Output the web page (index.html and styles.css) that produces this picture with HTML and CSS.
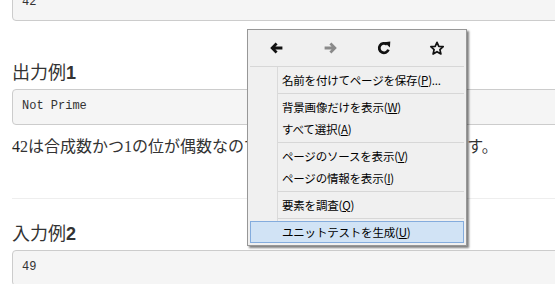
FILE: index.html
```html
<!DOCTYPE html>
<html>
<head>
    <title>出力例</title>
    <link rel="stylesheet" href="styles.css">
</head>
<body>
    <div class="page">
        <pre class="sample first">42</pre>

        <h3>出力例<span class="num">1</span></h3>
        <pre class="sample">Not Prime</pre>
        <p>42は合成数かつ1の位が偶数なので、素数ではないと判定されます。</p>

        <hr>

        <h3>入力例<span class="num">2</span></h3>
        <pre class="sample">49</pre>
    </div>

    <div class="menu">
        <div class="tools">
            <div class="tool">
                <svg width="13" height="12" viewBox="0 0 13 12"><path d="M5.6 0.4 L0.2 6 L5.6 11.6 L7.6 9.6 L5.4 7.6 H12.4 V4.4 H5.4 L7.6 2.4 Z" fill="#111"/></svg>
            </div>
            <div class="tool">
                <svg width="13" height="12" viewBox="0 0 13 12"><path d="M7.4 0.4 L12.8 6 L7.4 11.6 L5.4 9.6 L7.6 7.6 H0.6 V4.4 H7.6 L5.4 2.4 Z" fill="#8a8a8a"/></svg>
            </div>
            <div class="tool">
                <svg width="14" height="14" viewBox="0 0 14 14"><path d="M11.4 8.6 A4.7 4.7 0 1 1 10 3.5" fill="none" stroke="#111" stroke-width="2.8"/><path d="M7.4 1.2 L13.3 0.5 L12.9 6.4 Z" fill="#111"/></svg>
            </div>
            <div class="tool">
                <svg width="16" height="15" viewBox="0 0 16 15"><path d="M8 1.3 L9.8 5.3 L14.2 5.7 L10.9 8.6 L11.9 13 L8 10.7 L4.1 13 L5.1 8.6 L1.8 5.7 L6.2 5.3 Z" fill="none" stroke="#111" stroke-width="1.7" stroke-linejoin="round"/></svg>
            </div>
        </div>
        <div class="list">
            <div class="item">名前を付けてページを保存(<u>P</u>)...</div>
            <div class="sep"></div>
            <div class="item">背景画像だけを表示(<u>W</u>)</div>
            <div class="item">すべて選択(<u>A</u>)</div>
            <div class="sep"></div>
            <div class="item">ページのソースを表示(<u>V</u>)</div>
            <div class="item">ページの情報を表示(<u>I</u>)</div>
            <div class="sep"></div>
            <div class="item">要素を調査(<u>Q</u>)</div>
            <div class="sep"></div>
            <div class="item active">ユニットテストを生成(<u>U</u>)</div>
        </div>
    </div>
</body>
</html>
```

FILE: styles.css
```css
body {
    margin: 0;
    overflow: hidden;
    background-color: #fff;
    color: #333;
    font-family: "Liberation Serif", "Noto Sans CJK JP", serif;
}
.page {
    width: 600px;
    padding-left: 12px;
}
.sample {
    margin: 0;
    padding: 8px 9px 9px;
    font-family: "Liberation Mono", monospace;
    font-size: 12px;
    line-height: 17px;
    color: #333;
    background-color: #f5f5f5;
    border: 1px solid #ccc;
    border-radius: 4px;
}
.sample.first {
    margin-top: -15px;
    margin-bottom: 40px;
}
h3 {
    margin: 0 0 8px;
    height: 20px;
    font-family: "Noto Sans CJK JP", sans-serif;
    font-size: 18px;
    line-height: 20px;
    font-weight: normal;
    color: #333;
}
h3 .num {
    font-family: "Liberation Sans", sans-serif;
    font-weight: bold;
}
p {
    margin: 11px 0 0;
    height: 22px;
    font-size: 16px;
    line-height: 22px;
}
p::first-letter {
    color: #222;
}
hr {
    margin: 40px 0 23px;
    border: 0;
    border-top: 1px solid #eee;
}

.menu {
    position: absolute;
    left: 247px;
    top: 29px;
    width: 214px;
    padding: 0 2px 2px;
    background-color: #f0f0f0;
    border: 1px solid #979797;
    box-shadow: 2px 2px 2px rgba(0, 0, 0, 0.5);
    font-family: "Noto Sans CJK JP", sans-serif;
    font-size: 11.5px;
    letter-spacing: -0.2px;
    color: #000;
}
.tools {
    display: grid;
    grid-template-columns: repeat(4, 1fr);
    height: 36px;
    border-bottom: 1px solid #d7d7d7;
}
.tool {
    display: flex;
    align-items: center;
    justify-content: center;
}
.tool svg {
    display: block;
}
.list {
    padding-top: 2px;
    background: linear-gradient(to right, transparent 27px, #dadada 27px, #dadada 28px, transparent 28px);
}
.item {
    height: 22px;
    line-height: 22px;
    padding-left: 32px;
    white-space: nowrap;
}
.item u {
    text-underline-offset: 1px;
}
.item.active {
    box-sizing: border-box;
    padding-left: 31px;
    line-height: 20px;
    background-color: #d1e3f5;
    border: 1px solid #84acdd;
}
.sep {
    margin: 2px 0 2px 28px;
    border-top: 1px solid #d7d7d7;
}
```
